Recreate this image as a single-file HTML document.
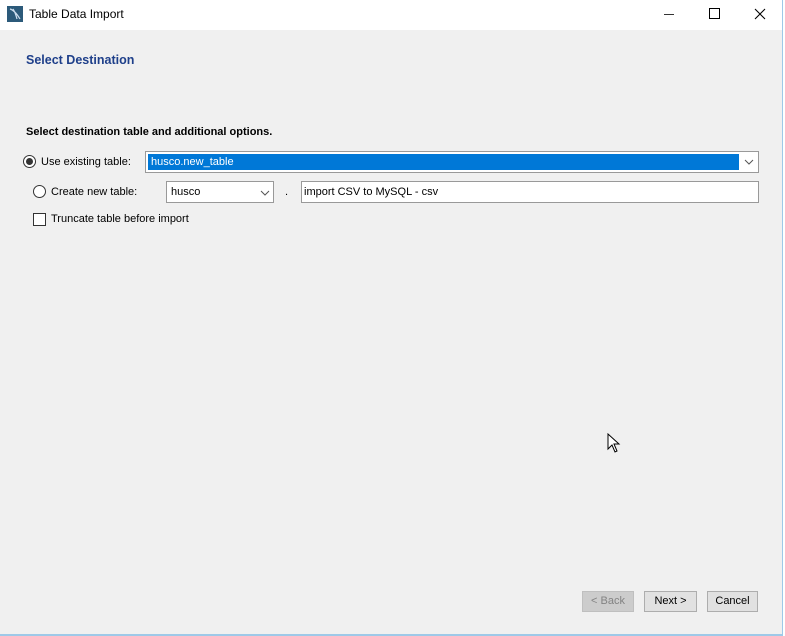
<!DOCTYPE html>
<html><head><meta charset="utf-8"><style>
*{margin:0;padding:0;box-sizing:border-box}
body{width:785px;height:636px;overflow:hidden;background:#fff;font-family:"Liberation Sans",sans-serif;font-size:11px;color:#000;position:relative}
.a{position:absolute}
.title{left:0;top:0;width:782px;height:30px;background:#fff}
.body{left:0;top:30px;width:782px;height:604px;background:#f0f0f0}
.rb{left:782px;top:0;width:3px;height:636px;background:#fff;border-left:1px solid #9ec9e8}
.bb{left:0;top:634px;width:783px;height:2px;background:#9ec9e8}
.inp{background:#fff;border:1px solid #7a7a7a}
.btn{background:#e1e1e1;border:1px solid #adadad;text-align:center;line-height:18px;font-size:11px}
.radio{width:13px;height:13px;border:1px solid #333;border-radius:50%;background:#fff}
</style></head><body>
<div class="a title"></div>
<svg class="a" style="left:7px;top:6px" width="16" height="16" viewBox="0 0 16 16"><rect width="16" height="16" fill="#2c5a7a"/><path d="M3 3 C7 4 10 8 13 13 M6 3 C8 6 9 9 10 13" stroke="#cde" stroke-width="1.2" fill="none"/></svg>
<div class="a" style="left:29px;top:7px;font-size:12px">Table Data Import</div>
<div class="a" style="left:664px;top:14px;width:10px;height:1px;background:#333"></div>
<div class="a" style="left:709px;top:8px;width:11px;height:11px;border:1px solid #000"></div>
<svg class="a" style="left:754px;top:8px" width="12" height="12"><path d="M1 1L11 11M11 1L1 11" stroke="#000" stroke-width="1.1"/></svg>
<div class="a body"></div>
<div class="a rb"></div>
<div class="a bb"></div>
<div class="a" style="left:26px;top:53px;font-size:12.5px;font-weight:bold;color:#1e3f8a">Select Destination</div>
<div class="a" style="left:26px;top:126px;font-weight:bold">Select destination table and additional options.</div>
<div class="a radio" style="left:23px;top:155px"><div class="a" style="left:2px;top:2px;width:7px;height:7px;border-radius:50%;background:#333"></div></div>
<div class="a" style="left:41px;top:156px">Use existing table:</div>
<div class="a inp" style="left:145px;top:151px;width:614px;height:22px;border-color:#999"><div class="a" style="left:2px;top:2px;width:591px;height:16px;background:#0078d7;color:#fff;padding-left:3px;line-height:16px">husco.new_table</div>
<svg class="a" style="left:598px;top:7px" width="10" height="7"><path d="M1 1L5 5L9 1" stroke="#555" fill="none"/></svg></div>
<div class="a radio" style="left:33px;top:185px"></div>
<div class="a" style="left:51px;top:186px">Create new table:</div>
<div class="a inp" style="left:166px;top:181px;width:108px;height:22px;border-color:#999"><div class="a" style="left:4px;top:4px">husco</div><svg class="a" style="left:93px;top:8px" width="10" height="7"><path d="M1 1L5 5L9 1" stroke="#555" fill="none"/></svg></div>
<div class="a" style="left:285px;top:186px">.</div>
<div class="a inp" style="left:301px;top:181px;width:458px;height:22px;border-color:#999"><div class="a" style="left:2px;top:4px">import CSV to MySQL - csv</div></div>
<div class="a" style="left:33px;top:213px;width:13px;height:13px;border:1px solid #333;background:#fff"></div>
<div class="a" style="left:51px;top:213px">Truncate table before import</div>
<svg class="a" style="left:607px;top:433px" width="14" height="22"><path d="M1 1L1 16L5 12L8 19L10 18L7 11L12 11Z" fill="#fff" stroke="#000" stroke-width="1"/></svg>
<div class="a btn" style="left:582px;top:591px;width:52px;height:21px;background:#cccccc;border-color:#bfbfbf;color:#838383">&lt; Back</div>
<div class="a btn" style="left:644px;top:591px;width:53px;height:21px">Next &gt;</div>
<div class="a btn" style="left:707px;top:591px;width:51px;height:21px">Cancel</div>
</body></html>
